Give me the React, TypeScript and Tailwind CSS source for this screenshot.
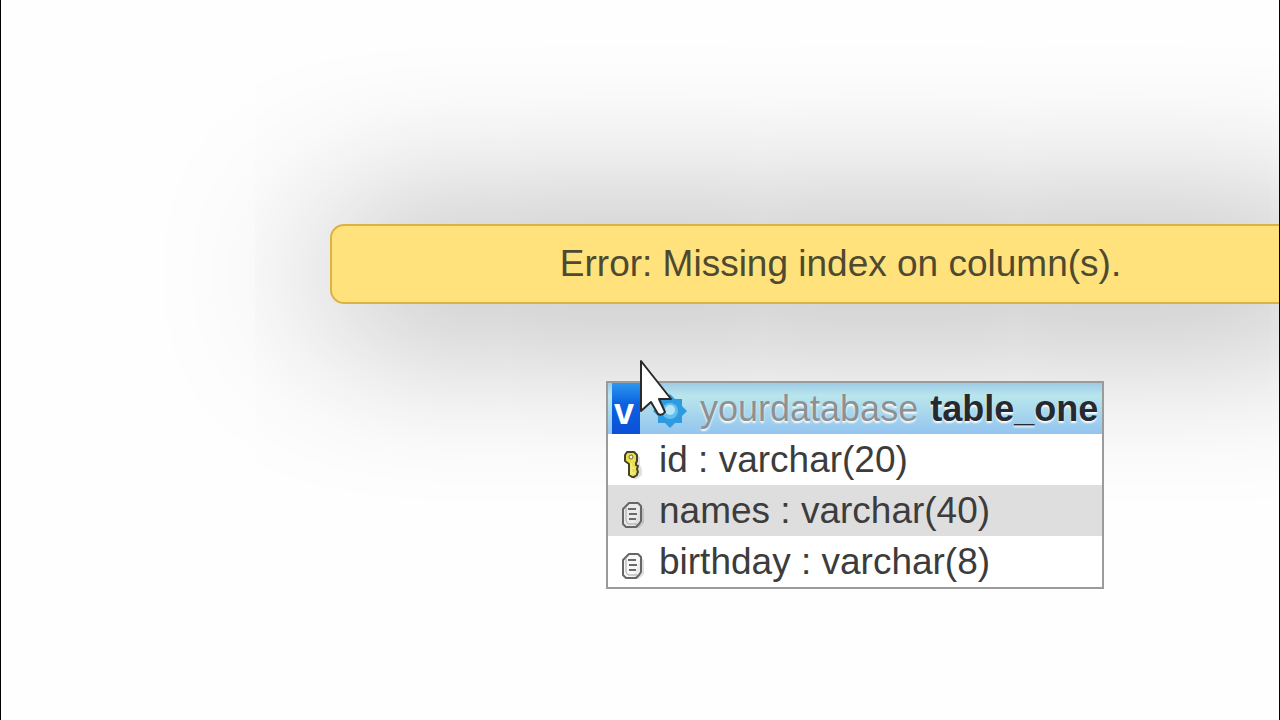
import { ReactNode } from 'react';

type Column = {
  name: string;
  type: string;
  primary?: boolean;
};

const columns: Column[] = [
  { name: 'id', type: 'varchar(20)', primary: true },
  { name: 'names', type: 'varchar(40)' },
  { name: 'birthday', type: 'varchar(8)' },
];

function KeyIcon() {
  return (
    <svg className="w-6 h-8" viewBox="0 0 24 32" fill="none">
      <path d="M15 6l5 3v8l2 4v6l-5 4h-4z" fill="#000" opacity=".12" />
      <path
        d="M7 4h7l3 3v6l-1 2v2l2 1-1 3 1 3-1 2v1l-3 2h-2l-3-2V16l-4-3V7z"
        fill="#e8e04c"
        stroke="#45432c"
        strokeWidth="2"
        strokeLinejoin="round"
      />
      <circle cx="11" cy="9" r="2" fill="#fffde0" stroke="#6f6a2a" />
      <path d="M11 15v12M12 20h3M12 25h3" stroke="#fbf7a0" strokeWidth="1" />
    </svg>
  );
}

function FieldIcon() {
  return (
    <svg className="w-6 h-8" viewBox="0 0 24 32" fill="none">
      <path d="M21 7l3 3v14l-5 5h-6z" fill="#000" opacity=".12" />
      <path
        d="M9 4h9l3 3v15l-2 3-3 3H6l-3-3V10l3-3z"
        fill="#f4f4f4"
        fillOpacity=".6"
        stroke="#666"
        strokeWidth="2"
        strokeLinejoin="round"
      />
      <path
        d="M6 8v14l2 3h9"
        stroke="#a3a3a3"
        strokeWidth="1"
        strokeLinejoin="round"
      />
      <path d="M8 10h8M9 15h8M9 20h7" stroke="#6b6b6b" strokeWidth="2" />
    </svg>
  );
}

function GearIcon() {
  return (
    <svg className="w-9 h-9" viewBox="0 0 36 36" fill="none">
      <path
        d="M18 1l5 5h7v7l5 5-5 5v7h-7l-5 5-5-5H6v-7l-5-5 5-5V6h7z"
        fill="#2e9be0"
      />
      <circle cx="18" cy="18" r="8" fill="#62c0ef" />
      <circle cx="18" cy="17" r="5" fill="#b5e4f7" />
    </svg>
  );
}

function Cursor() {
  return (
    <svg
      className="absolute -top-6 left-8 w-9 h-15"
      viewBox="0 0 36 60"
      fill="none"
    >
      <path
        d="M1 2v50l10-9 7 12q4 2 7-2l-6-13h12z"
        fill="#fff"
        stroke="#2a2a2a"
        strokeWidth="2"
        strokeLinejoin="round"
      />
    </svg>
  );
}

function ErrorBanner({ children }: { children: ReactNode }) {
  return (
    <div
      role="alert"
      className="ml-[329px] -mr-[72px] h-20 flex items-center justify-center rounded-[14px] border-2 border-[#dcb145] bg-[#ffe27c] text-[#4d4a31] shadow-[0_10px_170px_#8c8c8c]"
    >
      {children}
    </div>
  );
}

function DesignerTable() {
  return (
    <div className="relative w-max mt-[77px] ml-[605px] border-2 border-[#9b9b9b] bg-white text-[#3c3c3c]">
      <table>
        <thead>
          <tr className="h-[51px] bg-linear-to-b from-[#9dcbe6] via-[#b9e6ec] via-25% to-[#93c4ee]">
            <th colSpan={2} className="p-0 font-normal text-[36px]">
              <div className="flex items-center h-[51px] px-1">
                <button
                  aria-label="Show/hide columns"
                  className="w-7 h-full pt-1 pr-1 bg-linear-to-b from-[#2f97ee] via-[#0d62e0] via-40% to-[#0b50d8] text-white font-bold"
                >
                  v
                </button>
                <button aria-label="Structure" className="mx-3 pt-1">
                  <GearIcon />
                </button>
                <span className="text-[#8e9092] [text-shadow:0_2px_2px_#fff]">
                  yourdatabase
                </span>
                <span className="ml-3 font-bold text-[#26292e] [text-shadow:0_2px_2px_#fff]">
                  table_one
                </span>
              </div>
            </th>
          </tr>
        </thead>
        <tbody className="[&>*:nth-child(even)]:bg-[#dedede]">
          {columns.map((column) => (
            <tr key={column.name} className="h-[51px]">
              <td className="w-[51px] p-0 pl-3 pt-2">
                {column.primary ? <KeyIcon /> : <FieldIcon />}
              </td>
              <td className="p-0">
                {column.name} : {column.type}
              </td>
            </tr>
          ))}
        </tbody>
      </table>
      <Cursor />
    </div>
  );
}

export default function App() {
  return (
    <main className="min-h-screen overflow-hidden border-x border-black bg-[#fefefe] pt-[224px] font-['Liberation_Sans',Arial,sans-serif] text-[37px] leading-[50px]">
      <ErrorBanner>Error: Missing index on column(s).</ErrorBanner>
      <DesignerTable />
    </main>
  );
}
